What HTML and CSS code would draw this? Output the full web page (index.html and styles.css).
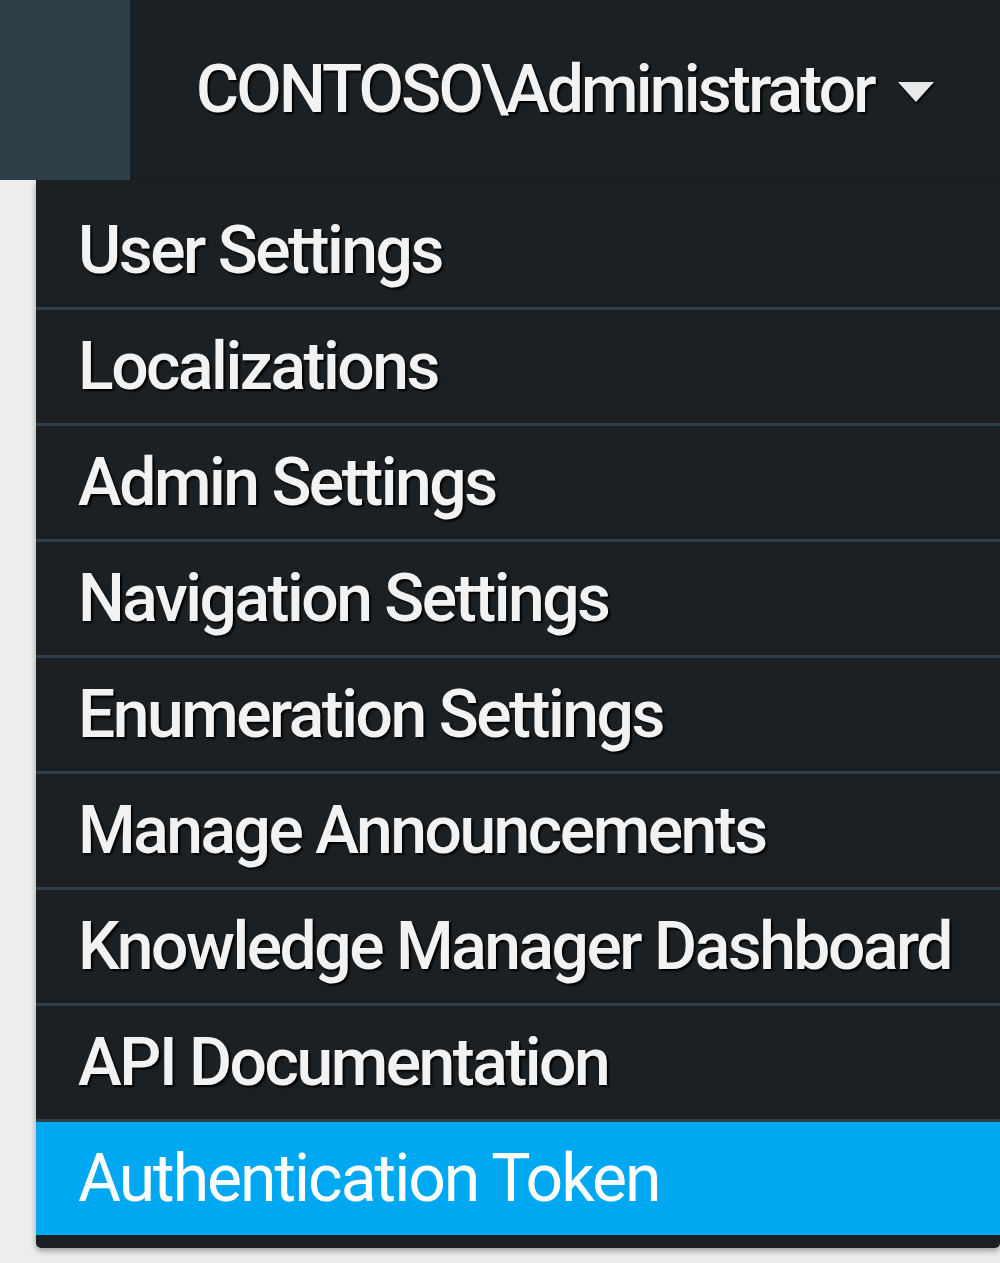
FILE: index.html
```html
<!DOCTYPE html>
<html>
<head>
<meta charset="utf-8">
<link rel="stylesheet" href="styles.css">
</head>
<body>
<header class="topbar">
  <div class="brand-block"></div>
  <div class="user-area">
    <span class="user-name">CONTOSO\Administrator</span>
    <svg class="caret" width="40" height="26" viewBox="0 0 40 26"><path d="M2 3 L38 3 L20 23 Z" fill="#e8eaea"/></svg>
  </div>
</header>
<nav class="menu">
  <ul class="menu-list">
    <li class="menu-item">User Settings</li>
    <li class="menu-item">Localizations</li>
    <li class="menu-item">Admin Settings</li>
    <li class="menu-item">Navigation Settings</li>
    <li class="menu-item">Enumeration Settings</li>
    <li class="menu-item">Manage Announcements</li>
    <li class="menu-item">Knowledge Manager Dashboard</li>
    <li class="menu-item">API Documentation</li>
    <li class="menu-item active">Authentication Token</li>
  </ul>
</nav>
</body>
</html>
```

FILE: styles.css
```css
html, body {
  margin: 0;
  padding: 0;
}
body {
  background: #eceeee;
  font-family: Roboto, "Liberation Sans", sans-serif;
  overflow: hidden;
  height: 1263px;
}
.topbar {
  display: flex;
  height: 180px;
  background: #1b2024;
}
.brand-block {
  width: 130px;
  background: #2e3e48;
}
.user-area {
  flex: 1;
  display: flex;
  align-items: center;
  padding-left: 66px;
  gap: 22px;
  color: #f2f2f2;
}
.user-name {
  font-size: 66px;
  font-weight: 500;
  letter-spacing: -2.8px;
  line-height: 180px;
  text-shadow: 2px 2px 2px #000;
}
.caret {
  margin-top: 4px;
  filter: drop-shadow(1px 2px 1px #000);
}
.menu {
  margin-left: 36px;
  background: #1b2024;
  padding: 14px 0 13px;
  border-radius: 0 0 5px 5px;
  box-shadow: 0 3px 6px rgba(0,0,0,0.35);
}
.menu-list {
  list-style: none;
  margin: 0;
  padding: 0;
}
.menu-item {
  height: 113px;
  line-height: 113px;
  padding-left: 42px;
  font-size: 66px;
  font-weight: 500;
  letter-spacing: -2.5px;
  color: #f2f2f2;
  text-shadow: 2px 2px 2px #000;
  border-bottom: 3px solid #2f3e48;
  white-space: nowrap;
}
.menu-item.active {
  background: #00a8f2;
  border-bottom: none;
  text-shadow: none;
  color: #ffffff;
  font-weight: 400;
  letter-spacing: -2px;
}
```
